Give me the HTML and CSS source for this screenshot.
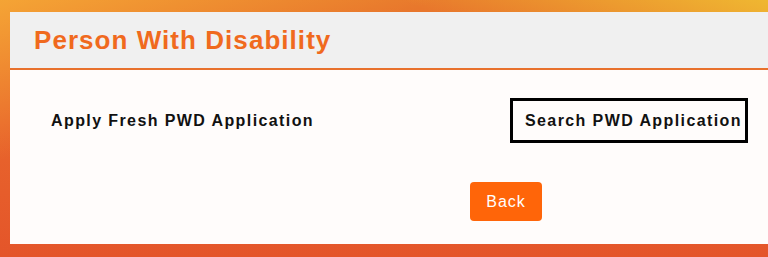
FILE: index.html
```html
<!DOCTYPE html>
<html lang="en">

<head>
    <meta charset="UTF-8">
    <meta name="viewport" content="width=device-width, initial-scale=1.0">
    <title>Person With Disability</title>
    <link rel="stylesheet" href="styles.css">
</head>

<body>
    <div class="card">
        <div class="card_header">
            <h1 class="title">Person With Disability</h1>
        </div>
        <div class="card_body">
            <div class="options">
                <div class="option">Apply Fresh PWD Application</div>
                <div class="option selected">Search PWD Application</div>
            </div>
            <div class="actions">
                <button class="back">Back</button>
            </div>
        </div>
    </div>
</body>

</html>
```

FILE: styles.css
```css
html,
body {
    margin: 0;
    height: 100%;
    overflow: hidden;
}

body {
    padding: 12px 0 0 10px;
    box-sizing: border-box;
    font-family: "Liberation Sans", Arial, sans-serif;
    background:
        linear-gradient(160deg, rgba(255, 200, 60, 0.55) 0%, rgba(255, 200, 60, 0) 30%),
        linear-gradient(200deg, rgba(240, 190, 50, 0.9) 0%, rgba(240, 190, 50, 0) 25%),
        linear-gradient(180deg, #e8782c 0%, #e8652c 50%, #e4552a 100%);
}

.card {
    height: 232px;
    background-color: #fffcfb;
}

.card_header {
    height: 56px;
    background-color: #f0f0f0;
    border-bottom: 2px solid #e8712c;
    padding-left: 24px;
}

.title {
    margin: 0;
    font-size: 26px;
    line-height: 57px;
    letter-spacing: 1.05px;
    color: #f06a1e;
    font-weight: 700;
}

.card_body {
    padding-top: 28px;
}

.options {
    display: flex;
    align-items: center;
    padding-left: 41px;
}

.option {
    width: 459px;
    font-size: 16px;
    font-weight: 700;
    letter-spacing: 1.4px;
    color: #111;
}

.option.selected {
    width: auto;
    height: 39px;
    line-height: 40px;
    border: 3px solid #000;
    padding: 0 3px 0 12px;
}

.actions {
    padding: 39px 0 0 460px;
}

.back {
    width: 72px;
    height: 39px;
    border: none;
    border-radius: 4px;
    background-color: #ff6509;
    color: #fff;
    font-family: "Liberation Sans", Arial, sans-serif;
    font-size: 16px;
    letter-spacing: 1px;
    padding: 0;
}
```
